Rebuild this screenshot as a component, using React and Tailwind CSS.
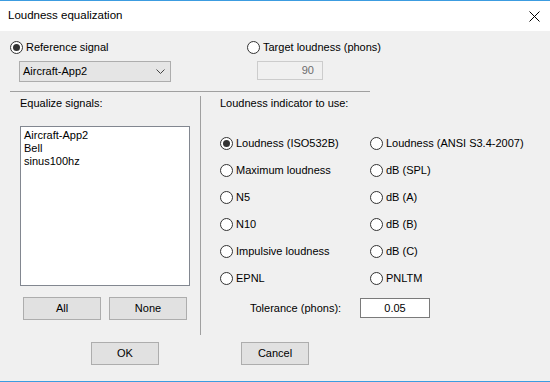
import React from "react";

function Radio({ checked, label, className = "" }) {
  return (
    <div className={"flex items-center " + className}>
      <span className="w-[13px] h-[13px] rounded-full border border-[#333333] bg-white flex items-center justify-center shrink-0">
        {checked && <span className="w-[7px] h-[7px] rounded-full bg-[#333333]" />}
      </span>
      <span className="ml-[3px] whitespace-nowrap">{label}</span>
    </div>
  );
}

export default function App() {
  const rows = [
    ["Loudness (ISO532B)", "Loudness (ANSI S3.4-2007)", true],
    ["Maximum loudness", "dB (SPL)"],
    ["N5", "dB (A)"],
    ["N10", "dB (B)"],
    ["Impulsive loudness", "dB (C)"],
    ["EPNL", "PNLTM"],
  ];
  return (
    <div
      className="w-[550px] h-[382px] flex flex-col border-t border-b border-[#3c9ce0] text-[11px] leading-[13px] text-black overflow-hidden"
      style={{ fontFamily: "'Liberation Sans', Arial, sans-serif" }}
    >
      <div className="h-[30px] bg-white flex items-center justify-between pl-[8px] pr-[10px] shrink-0">
        <span className="text-[11.5px] mt-[-1px]">Loudness equalization</span>
        <svg width="11" height="11" viewBox="0 0 11 11">
          <path d="M0.5 0.5 L10.5 10.5 M10.5 0.5 L0.5 10.5" stroke="#000" strokeWidth="1" />
        </svg>
      </div>
      <div className="flex-1 bg-[#f0f0f0] flex flex-col">
        <div className="flex pt-[10px] pl-[10px]">
          <div className="w-[237px] flex flex-col">
            <Radio checked label="Reference signal" className="h-[13px]" />
            <div className="ml-[9px] mt-[7px] w-[152px] h-[21px] border border-[#adadad] bg-[#e5e5e5] flex items-center justify-between pl-[3px] pr-[5px]">
              <span>Aircraft-App2</span>
              <svg width="9" height="6" viewBox="0 0 9 6">
                <path d="M0.5 0.5 L4.5 4.5 L8.5 0.5" stroke="#444" strokeWidth="1" fill="none" />
              </svg>
            </div>
          </div>
          <div className="flex flex-col">
            <Radio label="Target loudness (phons)" className="h-[13px]" />
            <div className="ml-[10px] mt-[7px] w-[66px] h-[19px] border border-[#cccccc] bg-[#f0f0f0] flex items-center justify-end pr-[8px] text-[#6d6d6d]">
              90
            </div>
          </div>
        </div>
        <div className="ml-[10px] mt-[9px] w-[360px] h-px bg-[#a0a0a0]" />
        <div className="flex h-[243px]">
          <div className="w-[190px] ml-[10px] pl-[10px] flex flex-col">
            <div className="mt-[5px]">Equalize signals:</div>
            <div className="mt-[16px] w-[170px] h-[160px] border border-[#828790] bg-white pl-[3px] pt-[2px] flex flex-col">
              <span>Aircraft-App2</span>
              <span>Bell</span>
              <span>sinus100hz</span>
            </div>
            <div className="mt-[11px] ml-[3px] flex gap-[8px]">
              <div className="w-[78px] h-[23px] border border-[#adadad] bg-[#e1e1e1] flex items-center justify-center">All</div>
              <div className="w-[78px] h-[23px] border border-[#adadad] bg-[#e1e1e1] flex items-center justify-center">None</div>
            </div>
          </div>
          <div className="w-px mt-[4px] h-[239px] bg-[#a0a0a0]" />
          <div className="pl-[19px] flex flex-col">
            <div className="mt-[5px]">Loudness indicator to use:</div>
            <div className="mt-[20px] flex flex-col">
              {rows.map(([a, b, c]) => (
                <div key={a} className="h-[27px] flex items-center">
                  <Radio checked={!!c} label={a} className="w-[150px]" />
                  <Radio label={b} />
                </div>
              ))}
            </div>
            <div className="mt-[6px] flex items-center">
              <span className="ml-[30px] w-[110px]">Tolerance (phons):</span>
              <div className="w-[70px] h-[20px] border border-[#7a7a7a] bg-white flex items-center justify-center">0.05</div>
            </div>
          </div>
        </div>
        <div className="mt-[7px] flex">
          <div className="ml-[91px] w-[68px] h-[23px] border border-[#adadad] bg-[#e1e1e1] flex items-center justify-center">OK</div>
          <div className="ml-[82px] w-[68px] h-[23px] border border-[#adadad] bg-[#e1e1e1] flex items-center justify-center">Cancel</div>
        </div>
      </div>
    </div>
  );
}
